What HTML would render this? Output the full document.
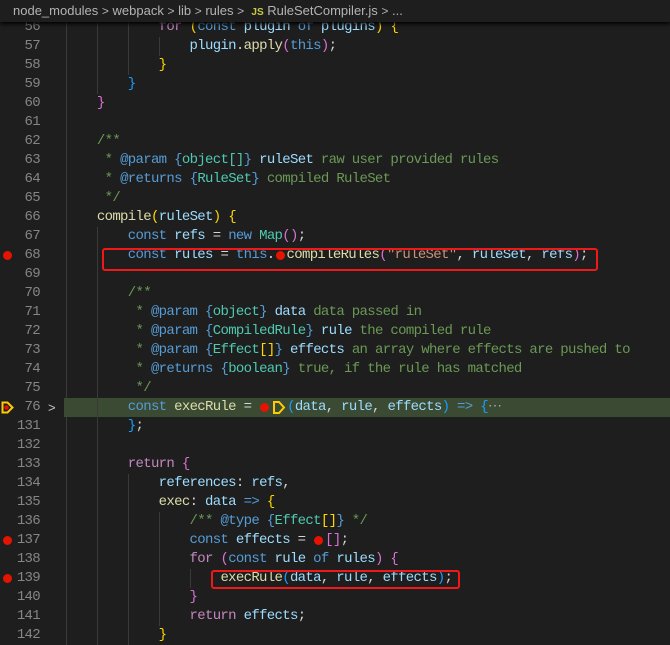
<!DOCTYPE html>
<html><head><meta charset="utf-8"><style>
body{margin:0;width:670px;height:642px;overflow:hidden;background:#1e1e1e;position:relative;font-family:"Liberation Mono",monospace;}
.r{position:absolute;left:0;width:670px;height:19px;line-height:19px;}
.n{position:absolute;left:0;width:40px;text-align:right;color:#858585;font-size:14px;letter-spacing:-0.68px;}
.c{position:absolute;left:66px;white-space:pre;font-size:14px;letter-spacing:-0.68px;color:#d4d4d4;}
.g{position:absolute;top:0;width:1px;height:19px;background:#3a3a3a;}
.bp{position:absolute;left:3px;top:5px;width:9px;height:9px;border-radius:50%;background:#e51400;}
.k{color:#569cd6}.p{color:#c586c0}.v{color:#9cdcfe}.f{color:#dcdcaa}.s{color:#ce9178}.cm{color:#6a9955}.t{color:#4ec9b0}
.y{color:#ffd700}.m{color:#da70d6}.b{color:#179fff}.w{color:#d4d4d4}
.dot{display:inline-block;width:12px;height:19px;position:relative;vertical-align:top}
.dot:after{content:"";position:absolute;left:1px;top:5px;width:9px;height:9px;border-radius:50%;background:#e51400}
.box{position:absolute;border:2px solid #f01818;border-radius:3px;}
#bc{position:absolute;left:0;top:0;width:670px;height:22px;background:#1e1e1e;box-shadow:0 2px 4px #000;font-family:"Liberation Sans",sans-serif;font-size:13px;color:#b3b3b3;line-height:22px;z-index:5;white-space:pre}
</style></head><body>
<div id="bc"><span style="position:absolute;left:13px">node_modules <span style="font-size:12px">&gt;</span> webpack <span style="font-size:12px">&gt;</span> lib <span style="font-size:12px">&gt;</span> rules <span style="font-size:12px">&gt;</span>  <b style="color:#cbcb41;font-size:10px">JS</b> RuleSetCompiler.js <span style="font-size:12px">&gt;</span> ...</span></div>

<div class="r" style="top:18px"><span class="n">56</span><i class="g" style="left:66px"></i><i class="g" style="left:97px"></i><i class="g" style="left:128px"></i><span class="c">            <span class="p">for</span> <span class="y">(</span><span class="k">const</span> <span class="v">plugin</span> <span class="k">of</span> <span class="v">plugins</span><span class="y">)</span> <span class="y">{</span></span></div>
<div class="r" style="top:37px"><span class="n">57</span><i class="g" style="left:66px"></i><i class="g" style="left:97px"></i><i class="g" style="left:128px"></i><i class="g" style="left:159px"></i><span class="c">                <span class="v">plugin</span>.<span class="f">apply</span><span class="m">(</span><span class="k">this</span><span class="m">)</span>;</span></div>
<div class="r" style="top:56px"><span class="n">58</span><i class="g" style="left:66px"></i><i class="g" style="left:97px"></i><i class="g" style="left:128px"></i><span class="c">            <span class="y">}</span></span></div>
<div class="r" style="top:75px"><span class="n">59</span><i class="g" style="left:66px"></i><i class="g" style="left:97px"></i><span class="c">        <span class="b">}</span></span></div>
<div class="r" style="top:94px"><span class="n">60</span><i class="g" style="left:66px"></i><span class="c">    <span class="m">}</span></span></div>
<div class="r" style="top:113px"><span class="n">61</span><i class="g" style="left:66px"></i></div>
<div class="r" style="top:132px"><span class="n">62</span><i class="g" style="left:66px"></i><span class="c">    <span class="cm">/**</span></span></div>
<div class="r" style="top:151px"><span class="n">63</span><i class="g" style="left:66px"></i><span class="c">     <span class="cm">* </span><span class="k">@param</span> <span class="k">{</span><span class="t">object[]</span><span class="k">}</span> <span class="v">ruleSet</span><span class="cm"> raw user provided rules</span></span></div>
<div class="r" style="top:170px"><span class="n">64</span><i class="g" style="left:66px"></i><span class="c">     <span class="cm">* </span><span class="k">@returns</span> <span class="k">{</span><span class="t">RuleSet</span><span class="k">}</span><span class="cm"> compiled RuleSet</span></span></div>
<div class="r" style="top:189px"><span class="n">65</span><i class="g" style="left:66px"></i><span class="c">     <span class="cm">*/</span></span></div>
<div class="r" style="top:208px"><span class="n">66</span><i class="g" style="left:66px"></i><span class="c">    <span class="f">compile</span><span class="y">(</span><span class="v">ruleSet</span><span class="y">)</span> <span class="y">{</span></span></div>
<div class="r" style="top:227px"><span class="n">67</span><i class="g" style="left:66px"></i><i class="g" style="left:97px"></i><span class="c">        <span class="k">const</span> <span class="v">refs</span> = <span class="k">new</span> <span class="t">Map</span><span class="m">()</span>;</span></div>
<div class="r" style="top:246px"><i class="bp"></i><span class="n">68</span><i class="g" style="left:66px"></i><i class="g" style="left:97px"></i><span class="c">        <span class="k">const</span> <span class="v">rules</span> = <span class="k">this</span>.<span class="dot"></span><span class="f">compileRules</span><span class="m">(</span><span class="s">"ruleSet"</span>, <span class="v">ruleSet</span>, <span class="v">refs</span><span class="m">)</span>;</span></div>
<div class="r" style="top:265px"><span class="n">69</span><i class="g" style="left:66px"></i><i class="g" style="left:97px"></i></div>
<div class="r" style="top:284px"><span class="n">70</span><i class="g" style="left:66px"></i><i class="g" style="left:97px"></i><span class="c">        <span class="cm">/**</span></span></div>
<div class="r" style="top:303px"><span class="n">71</span><i class="g" style="left:66px"></i><i class="g" style="left:97px"></i><span class="c">         <span class="cm">* </span><span class="k">@param</span> <span class="k">{</span><span class="t">object</span><span class="k">}</span> <span class="v">data</span><span class="cm"> data passed in</span></span></div>
<div class="r" style="top:322px"><span class="n">72</span><i class="g" style="left:66px"></i><i class="g" style="left:97px"></i><span class="c">         <span class="cm">* </span><span class="k">@param</span> <span class="k">{</span><span class="t">CompiledRule</span><span class="k">}</span> <span class="v">rule</span><span class="cm"> the compiled rule</span></span></div>
<div class="r" style="top:341px"><span class="n">73</span><i class="g" style="left:66px"></i><i class="g" style="left:97px"></i><span class="c">         <span class="cm">* </span><span class="k">@param</span> <span class="k">{</span><span class="t">Effect</span><span class="y">[]</span><span class="k">}</span> <span class="v">effects</span><span class="cm"> an array where effects are pushed to</span></span></div>
<div class="r" style="top:360px"><span class="n">74</span><i class="g" style="left:66px"></i><i class="g" style="left:97px"></i><span class="c">         <span class="cm">* </span><span class="k">@returns</span> <span class="k">{</span><span class="t">boolean</span><span class="k">}</span><span class="cm"> true, if the rule has matched</span></span></div>
<div class="r" style="top:379px"><span class="n">75</span><i class="g" style="left:66px"></i><i class="g" style="left:97px"></i><span class="c">         <span class="cm">*/</span></span></div>
<div class="r" style="top:398px"><div style="position:absolute;left:64px;top:0;width:606px;height:19px;background:#3b4a32"></div>
<svg style="position:absolute;left:1px;top:3px" width="13" height="13" viewBox="0 0 13 13"><path d="M1.5 1.5h5l5 5-5 5h-5z" fill="none" stroke="#ffcc00" stroke-width="2"/><circle cx="5.5" cy="6.5" r="2.3" fill="#e51400"/></svg>
<span class="n">76</span><span style="position:absolute;left:48px;top:0;color:#c5c5c5;font-family:'Liberation Sans';font-size:13px">&gt;</span><i class="g" style="left:97px"></i><span class="c">        <span class="k">const</span> <span class="f">execRule</span> = <span class="dot"></span><svg width="16" height="19" style="vertical-align:top"><path d="M3 4h5l5 5.5-5 5.5h-5z" fill="none" stroke="#ffcc00" stroke-width="2"/></svg><span class="b">(</span><span class="v">data</span>, <span class="v">rule</span>, <span class="v">effects</span><span class="b">)</span> <span class="k">=&gt;</span> <span class="b">{</span><span style="color:#aaa">⋯</span></span></div>
<div class="r" style="top:417px"><span class="n">131</span><i class="g" style="left:66px"></i><i class="g" style="left:97px"></i><span class="c">        <span class="b">}</span>;</span></div>
<div class="r" style="top:436px"><span class="n">132</span><i class="g" style="left:66px"></i><i class="g" style="left:97px"></i></div>
<div class="r" style="top:455px"><span class="n">133</span><i class="g" style="left:66px"></i><i class="g" style="left:97px"></i><span class="c">        <span class="p">return</span> <span class="m">{</span></span></div>
<div class="r" style="top:474px"><span class="n">134</span><i class="g" style="left:66px"></i><i class="g" style="left:97px"></i><i class="g" style="left:128px"></i><span class="c">            <span class="v">references</span>: <span class="v">refs</span>,</span></div>
<div class="r" style="top:493px"><span class="n">135</span><i class="g" style="left:66px"></i><i class="g" style="left:97px"></i><i class="g" style="left:128px"></i><span class="c">            <span class="f">exec</span>: <span class="v">data</span> <span class="k">=&gt;</span> <span class="y">{</span></span></div>
<div class="r" style="top:512px"><span class="n">136</span><i class="g" style="left:66px"></i><i class="g" style="left:97px"></i><i class="g" style="left:128px"></i><i class="g" style="left:159px"></i><span class="c">                <span class="cm">/** </span><span class="k">@type</span> <span class="k">{</span><span class="t">Effect</span><span class="y">[]</span><span class="k">}</span><span class="cm"> */</span></span></div>
<div class="r" style="top:531px"><i class="bp"></i><span class="n">137</span><i class="g" style="left:66px"></i><i class="g" style="left:97px"></i><i class="g" style="left:128px"></i><i class="g" style="left:159px"></i><span class="c">                <span class="k">const</span> <span class="v">effects</span> = <span class="dot"></span><span class="m">[]</span>;</span></div>
<div class="r" style="top:550px"><span class="n">138</span><i class="g" style="left:66px"></i><i class="g" style="left:97px"></i><i class="g" style="left:128px"></i><i class="g" style="left:159px"></i><span class="c">                <span class="p">for</span> <span class="m">(</span><span class="k">const</span> <span class="v">rule</span> <span class="k">of</span> <span class="v">rules</span><span class="m">)</span> <span class="m">{</span></span></div>
<div class="r" style="top:569px"><i class="bp"></i><span class="n">139</span><i class="g" style="left:66px"></i><i class="g" style="left:97px"></i><i class="g" style="left:128px"></i><i class="g" style="left:159px"></i><i class="g" style="left:190px"></i><span class="c">                    <span class="f">execRule</span><span class="b">(</span><span class="v">data</span>, <span class="v">rule</span>, <span class="v">effects</span><span class="b">)</span>;</span></div>
<div class="r" style="top:588px"><span class="n">140</span><i class="g" style="left:66px"></i><i class="g" style="left:97px"></i><i class="g" style="left:128px"></i><i class="g" style="left:159px"></i><span class="c">                <span class="m">}</span></span></div>
<div class="r" style="top:607px"><span class="n">141</span><i class="g" style="left:66px"></i><i class="g" style="left:97px"></i><i class="g" style="left:128px"></i><i class="g" style="left:159px"></i><span class="c">                <span class="p">return</span> <span class="v">effects</span>;</span></div>
<div class="r" style="top:626px"><span class="n">142</span><i class="g" style="left:66px"></i><i class="g" style="left:97px"></i><i class="g" style="left:128px"></i><span class="c">            <span class="y">}</span></span></div>

<div class="box" style="left:102px;top:248px;width:492px;height:19px"></div>
<div class="box" style="left:211px;top:570px;width:245px;height:15px"></div>
</body></html>
